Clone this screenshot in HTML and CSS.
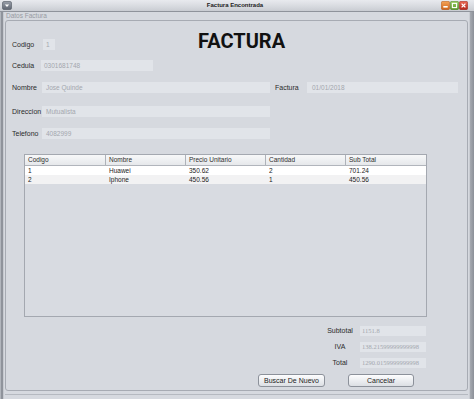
FILE: index.html
```html
<!DOCTYPE html>
<html>
<head>
<meta charset="utf-8">
<link rel="stylesheet" href="styles.css">
</head>
<body>
<div class="window">
  <div class="titlebar">
    <span class="sysicon">
      <svg width="10" height="9" viewBox="0 0 10 9"><defs><linearGradient id="gs" x1="0" y1="0" x2="0" y2="1"><stop offset="0" stop-color="#9aa0aa"/><stop offset="1" stop-color="#5f6672"/></linearGradient></defs><rect x="0.5" y="0.5" width="9" height="8" rx="1.5" fill="url(#gs)" stroke="#4f5560" stroke-width="0.6"/><path d="M2.8 3.4 L7.2 3.4 L5 6 Z" fill="#fff"/></svg>
    </span>
    <span class="title">Factura Encontrada</span>
    <span class="controls">
      <svg width="9" height="9" viewBox="0 0 9 9"><defs><linearGradient id="go" x1="0" y1="0" x2="0" y2="1"><stop offset="0" stop-color="#f5a55a"/><stop offset="1" stop-color="#cf6318"/></linearGradient></defs><rect x="0.3" y="0.3" width="8.4" height="8.4" rx="1.6" fill="url(#go)" stroke="#a84f12" stroke-width="0.5"/><rect x="2.3" y="5" width="4.4" height="1.6" fill="#fff"/></svg>
      <svg width="9" height="9" viewBox="0 0 9 9"><defs><linearGradient id="gg" x1="0" y1="0" x2="0" y2="1"><stop offset="0" stop-color="#9fd065"/><stop offset="1" stop-color="#5a9628"/></linearGradient></defs><rect x="0.3" y="0.3" width="8.4" height="8.4" rx="1.6" fill="url(#gg)" stroke="#3f7419" stroke-width="0.5"/><rect x="2.4" y="2.4" width="4.2" height="4.2" fill="none" stroke="#fff" stroke-width="1.1"/></svg>
      <svg width="9" height="9" viewBox="0 0 9 9"><defs><linearGradient id="gr" x1="0" y1="0" x2="0" y2="1"><stop offset="0" stop-color="#ec6a55"/><stop offset="1" stop-color="#b3261a"/></linearGradient></defs><rect x="0.3" y="0.3" width="8.4" height="8.4" rx="1.6" fill="url(#gr)" stroke="#8a1c12" stroke-width="0.5"/><path d="M2.6 2.6 L6.4 6.4 M6.4 2.6 L2.6 6.4" stroke="#fff" stroke-width="1.3"/></svg>
    </span>
  </div>
  <div class="frame">
    <div class="edge-l"></div>
    <div class="content">
      <div class="group-title">Datos Factura</div>
      <div class="group">
        <div class="row row-first">
          <span class="lbl lbl-top">Codigo</span>
          <span class="fld fld-top w-cod">1</span>
          <h1 class="heading">FACTURA</h1>
        </div>
        <div class="row row-ced">
          <span class="lbl">Cedula</span>
          <span class="fld w-ced">0301681748</span>
        </div>
        <div class="row row-nom">
          <span class="lbl">Nombre</span>
          <span class="fld w-long">Jose Quinde</span>
          <span class="lbl lbl-fac">Factura</span>
          <span class="fld w-fac">01/01/2018</span>
        </div>
        <div class="row row-dir">
          <span class="lbl">Direccion</span>
          <span class="fld w-long">Mutualista</span>
        </div>
        <div class="row row-tel">
          <span class="lbl">Telefono</span>
          <span class="fld w-long">4082999</span>
        </div>
        <div class="table">
          <div class="thead">
            <span class="th">Codigo</span>
            <span class="th">Nombre</span>
            <span class="th">Precio Unitario</span>
            <span class="th">Cantidad</span>
            <span class="th">Sub Total</span>
          </div>
          <div class="tr">
            <span class="td">1</span>
            <span class="td">Huawei</span>
            <span class="td">350.62</span>
            <span class="td">2</span>
            <span class="td">701.24</span>
          </div>
          <div class="tr alt">
            <span class="td">2</span>
            <span class="td">Iphone</span>
            <span class="td">450.56</span>
            <span class="td">1</span>
            <span class="td">450.56</span>
          </div>
        </div>
        <div class="trow trow-first">
          <span class="tlbl">Subtotal</span>
          <span class="tfld">1151.8</span>
        </div>
        <div class="trow">
          <span class="tlbl">IVA</span>
          <span class="tfld">138.21599999999998</span>
        </div>
        <div class="trow">
          <span class="tlbl">Total</span>
          <span class="tfld">1290.0159999999998</span>
        </div>
        <div class="btns">
          <button class="btn btn-buscar">Buscar De Nuevo</button>
          <button class="btn btn-cancel">Cancelar</button>
        </div>
      </div>
      <div class="bottom-line"></div>
    </div>
    <div class="edge-r"></div>
  </div>
</div>
</body>
</html>
```

FILE: styles.css
```css
* { box-sizing: border-box; margin: 0; padding: 0; }
html, body { width: 474px; height: 399px; overflow: hidden; }
body {
  font-family: "Liberation Sans", Arial, sans-serif;
  background: #d6d9df;
}
.window {
  width: 474px;
  height: 399px;
  display: flex;
  flex-direction: column;
  background: #d6d9df;
}
.titlebar {
  height: 12px;
  flex: none;
  display: grid;
  grid-template-columns: 1fr auto 1fr;
  align-items: center;
  padding: 0 6px 0 2px;
  background: linear-gradient(#e8eaee, #d8dbe0 55%, #c9ccd2);
  border-bottom: 1px solid #8f939b;
}
.sysicon { display: flex; align-items: center; }
.sysicon svg { display: block; }
.title {
  font-size: 6px;
  font-weight: bold;
  color: #1c1c1c;
  line-height: 11px;
  white-space: nowrap;
}
.controls {
  justify-self: end;
  display: flex;
  align-items: center;
}
.controls svg { display: block; }

.frame { flex: 1; display: flex; }
.edge-l {
  width: 4px;
  flex: none;
  background: linear-gradient(to right, #b2b6bd 0, #b2b6bd 1px, #8f939b 1px, #8f939b 3px, #c6c9cf 3px);
}
.edge-r {
  width: 5px;
  flex: none;
  background: linear-gradient(to right, #c9ccd2 0, #c9ccd2 1px, #a6aab1 1px, #8c9098);
}
.content {
  flex: 1;
  display: flex;
  flex-direction: column;
  padding: 0 1px;
}
.group-title {
  height: 8px;
  line-height: 8px;
  font-size: 6.5px;
  color: #979ba3;
  padding-left: 1px;
}
.group {
  height: 371px;
  flex: none;
  border: 1px solid #a7abb3;
  border-radius: 3px;
  padding: 10px 0 0 6px;
}
.bottom-line {
  margin-top: 3px;
  border-top: 1px solid #b5b9c0;
  flex: 1;
}

.row { display: flex; align-items: flex-start; }
.row-ced { margin-top: 9px; }
.row-nom { margin-top: 11px; }
.row-dir { margin-top: 13px; }
.row-tel { margin-top: 11px; }

.lbl {
  width: 30px;
  flex: none;
  font-size: 7px;
  line-height: 11px;
  color: #2a2a2a;
  white-space: nowrap;
}
.lbl-top { margin-top: 8px; }
.fld {
  height: 11px;
  flex: none;
  background: #e1e4e9;
  font-size: 6.5px;
  line-height: 11px;
  color: #a3a7ae;
  padding-left: 3px;
  white-space: nowrap;
  overflow: hidden;
}
.fld-top { margin-top: 8px; }
.w-cod { width: 12px; margin-left: 1px; }
.w-ced { width: 112px; margin-left: -1px; }
.w-long { width: 228px; padding-left: 4px; }
.lbl-fac { margin-left: 5px; width: 32px; }
.w-fac { width: 151px; padding-left: 5px; }

.heading {
  margin-left: 143px;
  font-family: Roboto, "Liberation Sans", sans-serif;
  font-weight: 700;
  font-size: 20px;
  line-height: 20px;
  color: #111;
  letter-spacing: 0;
}

.table {
  margin: 15px 0 0 12px;
  width: 403px;
  height: 163px;
  border: 1px solid #a4a8b0;
  background: #d8dbe1;
}
.thead, .tr {
  display: grid;
  grid-template-columns: 81px 80px 80px 80px 80px;
}
.thead {
  height: 11px;
  background: linear-gradient(#f7f8f9, #e6e8eb);
  border-bottom: 1px solid #b1b5bc;
}
.th {
  font-size: 6.5px;
  line-height: 10px;
  color: #2e2e2e;
  padding-left: 3px;
  border-right: 1px solid #aeb2b9;
  white-space: nowrap;
}
.th:last-child { border-right: none; }
.tr { height: 9px; background: #ffffff; }
.tr.alt { background: #f2f2f3; }
.td {
  font-size: 6.5px;
  line-height: 9px;
  color: #222;
  padding-left: 3px;
  white-space: nowrap;
}

.trow {
  display: flex;
  justify-content: flex-end;
  padding-right: 41px;
  margin-top: 6px;
}
.trow-first { margin-top: 9px; }
.tlbl {
  width: 30px;
  margin-right: 5px;
  text-align: center;
  font-size: 7px;
  line-height: 10px;
  color: #2a2a2a;
}
.tfld {
  width: 66px;
  height: 10px;
  background: #e1e4e9;
  font-family: "Liberation Serif", "Times New Roman", serif;
  font-size: 6.5px;
  line-height: 10px;
  color: #a3a7ae;
  padding-left: 2px;
  white-space: nowrap;
  overflow: hidden;
}

.btns {
  display: flex;
  justify-content: flex-end;
  padding-right: 53px;
  margin-top: 6px;
  gap: 23px;
}
.btn {
  height: 13px;
  font-family: "Liberation Sans", Arial, sans-serif;
  font-size: 7px;
  line-height: 11px;
  color: #222;
  background: linear-gradient(#fdfdfe, #eceef1 50%, #dcdfe4);
  border: 1px solid #8c919a;
  border-radius: 3px;
  text-align: center;
  padding: 0;
}
.btn-buscar { width: 67px; }
.btn-cancel { width: 66px; }
```
